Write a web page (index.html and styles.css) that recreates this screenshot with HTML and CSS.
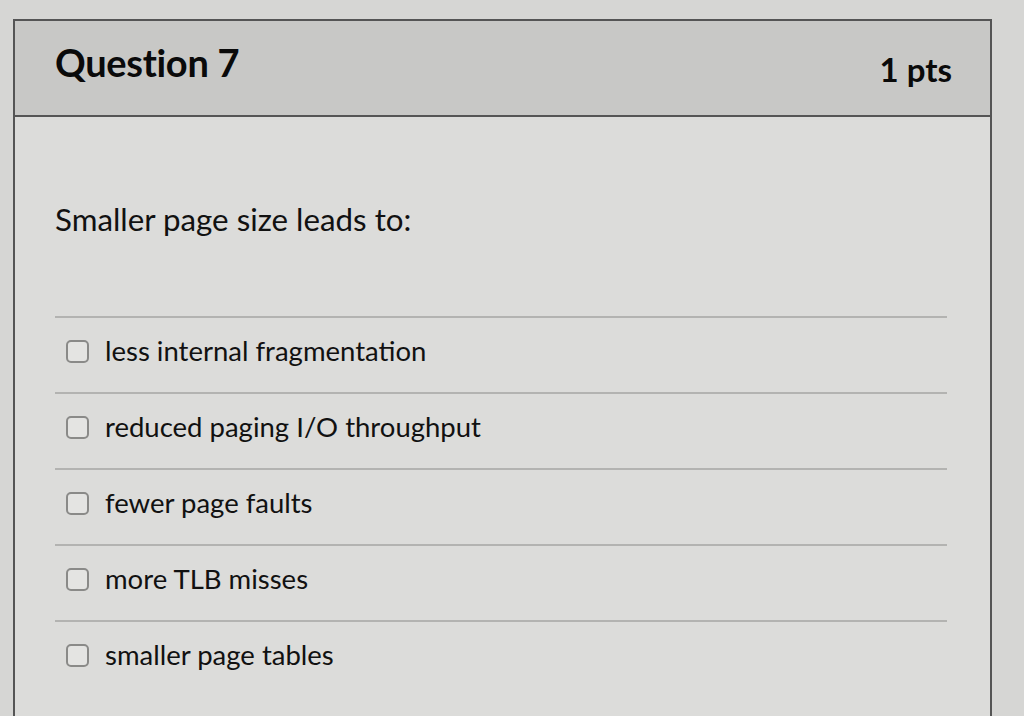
FILE: index.html
```html
<!DOCTYPE html>
<html>
<head>
<meta charset="utf-8">
<link rel="stylesheet" href="styles.css">
</head>
<body>
<div class="page">
  <div class="card">
    <div class="card-header">
      <h2 class="title">Question 7</h2>
      <div class="points">1 pts</div>
    </div>
    <div class="card-body">
      <p class="question">Smaller page size leads to:</p>
      <ul class="answers">
        <li class="answer"><span class="box"></span><span class="label">less internal fragmentation</span></li>
        <li class="answer"><span class="box"></span><span class="label">reduced paging I/O throughput</span></li>
        <li class="answer"><span class="box"></span><span class="label">fewer page faults</span></li>
        <li class="answer"><span class="box"></span><span class="label">more TLB misses</span></li>
        <li class="answer"><span class="box"></span><span class="label">smaller page tables</span></li>
      </ul>
    </div>
  </div>
</div>
</body>
</html>
```
FILE: styles.css
```css
html, body {
  margin: 0;
  padding: 0;
  background: #d6d6d4;
  font-family: Lato, "Liberation Sans", sans-serif;
  color: #111;
}
.page {
  padding: 19px 32px 0 13px;
  height: 716px;
  box-sizing: border-box;
  overflow: hidden;
}
.card {
  border: 2px solid #555;
  border-bottom: none;
  background: #dcdcda;
  height: 720px;
}
.card-header {
  background: #c8c8c6;
  border-bottom: 2px solid #555;
  height: 94px;
  display: flex;
  align-items: center;
  justify-content: space-between;
  padding: 0 38px 0 40px;
}
.title {
  margin: 0;
  font-size: 38px;
  font-weight: 700;
  letter-spacing: -0.3px;
  margin-top: -12px;
  color: #0a0a0a;
}
.points {
  font-size: 33px;
  font-weight: 700;
  margin-top: 2px;
  color: #0a0a0a;
}
.card-body {
  padding: 82px 43px 0 40px;
}
.question {
  margin: 0 0 77px 0;
  font-size: 31.3px;
  line-height: 40px;
}
.answers {
  list-style: none;
  margin: 0;
  padding: 0;
}
.answer {
  border-top: 2px solid #b3b3b1;
  height: 74px;
  display: flex;
  align-items: center;
  padding-left: 11px;
}
.box {
  width: 19px;
  height: 19px;
  border: 2px solid #8a8a88;
  border-radius: 5px;
  background: #e4e4e2;
  margin-right: 16px;
  margin-top: -8px;
}
.label {
  font-size: 27.5px;
  margin-top: -10px;
}
```
